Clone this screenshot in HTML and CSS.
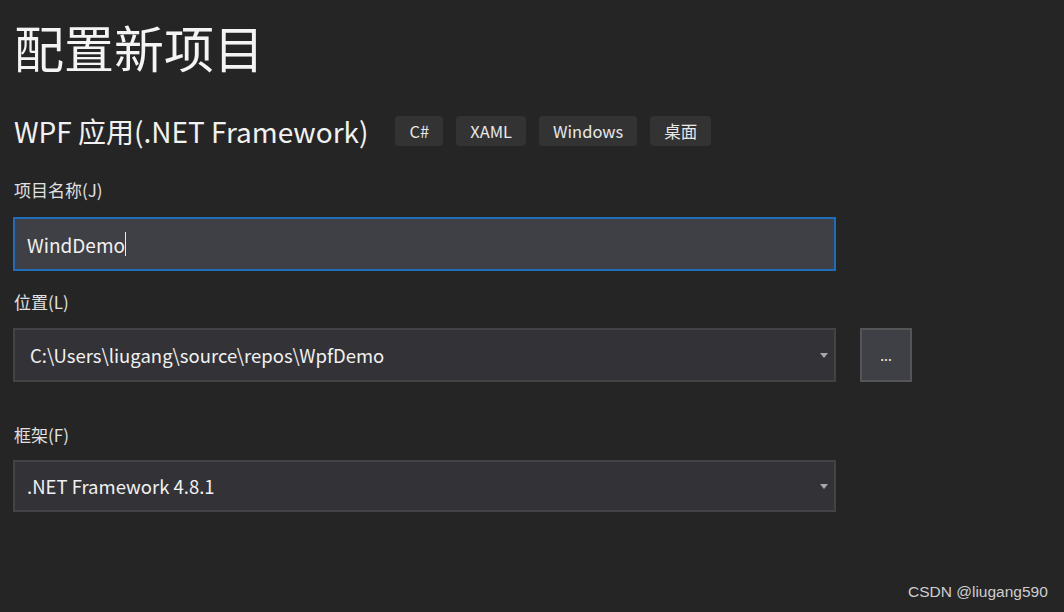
FILE: index.html
```html
<!DOCTYPE html>
<html lang="zh-CN">
<head>
<meta charset="utf-8">
<title>配置新项目</title>
<link rel="stylesheet" href="styles.css">
</head>
<body>
<div class="page">
  <h1 class="title">配置新项目</h1>
  <div class="subtitle-row">
    <span class="subtitle">WPF 应用(.NET Framework)</span>
    <div class="tags">
      <span class="tag">C#</span>
      <span class="tag">XAML</span>
      <span class="tag">Windows</span>
      <span class="tag">桌面</span>
    </div>
  </div>

  <div class="label label-name">项目名称(J)</div>
  <div class="input focused"><span class="value">WindDemo</span><span class="caret"></span></div>

  <div class="label label-loc">位置(L)</div>
  <div class="row">
    <div class="combo combo-loc"><span class="value loc">C:\Users\liugang\source\repos\WpfDemo</span><span class="arrow"></span></div>
    <div class="browse">...</div>
  </div>

  <div class="label label-fw">框架(F)</div>
  <div class="combo combo-fw"><span class="value">.NET Framework 4.8.1</span><span class="arrow"></span></div>
</div>
<div class="watermark">CSDN @liugang590</div>
</body>
</html>
```

FILE: styles.css
```css
html, body {
  margin: 0;
  padding: 0;
  background: #252526;
  width: 1064px;
  height: 612px;
  overflow: hidden;
}
body {
  position: relative;
  font-family: "Noto Sans CJK SC", "Noto Sans", sans-serif;
  color: #f1f1f1;
}
.page {
  display: flex;
  flex-direction: column;
  padding-left: 13px;
}
.title {
  margin: 16px 0 0 0;
  height: 60px;
  line-height: 60px;
  font-size: 50px;
  font-weight: 400;
  color: #f4f4f4;
  padding-left: 1px;
}
.subtitle-row {
  margin-top: 40px;
  height: 30px;
  display: flex;
  align-items: center;
  padding-left: 1px;
}
.subtitle {
  font-size: 28px;
  line-height: 30px;
  color: #f1f1f1;
}
.tags {
  display: flex;
  gap: 13px;
  margin-left: 27px;
}
.tag {
  height: 30px;
  line-height: 30px;
  padding: 0 14px;
  background: #333333;
  border-radius: 4px;
  font-size: 16.5px;
  color: #e8e8e8;
}
.label {
  font-size: 17px;
  line-height: 22px;
  height: 22px;
  color: #e0e0e0;
  padding-left: 1px;
}
.label-name { margin-top: 33px; }
.label-loc { margin-top: 20px; }
.label-fw { margin-top: 42px; }

.input, .combo {
  box-sizing: border-box;
  width: 823px;
  display: flex;
  align-items: center;
  position: relative;
  font-size: 18.5px;
  color: #f1f1f1;
}
.input {
  margin-top: 16px;
  height: 54px;
  background: #3f3f46;
  border: 2px solid #1c6dbb;
  padding-left: 12px;
  font-size: 19px;
}
.caret {
  display: inline-block;
  width: 1px;
  height: 24px;
  background: #e8e8e8;
}
.row {
  margin-top: 15px;
  display: flex;
  gap: 24px;
}
.combo {
  background: #333337;
  border: 2px solid #434346;
}
.combo-loc {
  height: 54px;
  padding-left: 15px;
}
.combo-fw {
  margin-top: 14px;
  height: 52px;
  padding-left: 12px;
}
.arrow {
  position: absolute;
  right: 6px;
  top: 50%;
  margin-top: -2px;
  width: 0;
  height: 0;
  border-left: 4px solid transparent;
  border-right: 4px solid transparent;
  border-top: 5px solid #a8a8a8;
}
.browse {
  box-sizing: border-box;
  width: 52px;
  height: 54px;
  background: #3f3f46;
  border: 2px solid #555558;
  display: flex;
  align-items: center;
  justify-content: center;
  font-size: 14px;
  color: #f1f1f1;
  line-height: 1;
}
.watermark {
  position: absolute;
  left: 908px;
  top: 582px;
  font-family: "Liberation Sans", Arial, sans-serif;
  font-size: 15.5px;
  line-height: 20px;
  color: #cfcfcf;
}
```
